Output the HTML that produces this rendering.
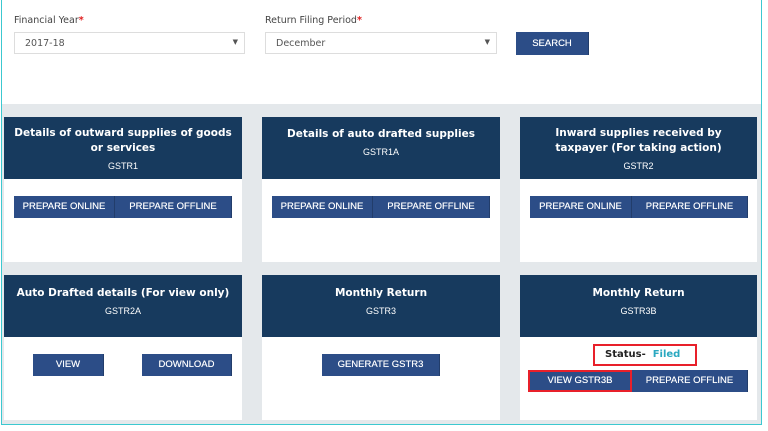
<!DOCTYPE html>
<html><head><style>
*{box-sizing:border-box;margin:0;padding:0}
body{width:768px;height:431px;background:#fff;font-family:"DejaVu Sans","Liberation Sans",sans-serif;position:relative;overflow:hidden}
.frame{position:absolute;left:1px;top:-2px;width:761px;height:427px;border:1px solid #3cc8d0}
.a{position:absolute}
.lbl{font-size:9.5px;color:#444}
.lbl b{color:#e02020}
.sel{height:22px;border:1px solid #ddd;font-size:9.5px;color:#555;padding:5px 10px}
.sel span{position:absolute;right:6px;top:5px;font-size:7px;color:#555}
.gray{left:2px;top:104px;width:759px;height:320px;background:#e4e8eb}
.card{background:#fff}
.hd{background:#173a5e;color:#fff;text-align:center;font-size:10.5px;font-weight:bold;line-height:15px;display:flex;flex-direction:column;justify-content:flex-start;padding-top:11px}
.hd small{font-weight:normal;font-size:9px;display:block;margin-top:3px;font-family:"Liberation Sans",sans-serif}
.btn{background:#2c4d87;color:#fff;font-size:9.5px;font-family:"Liberation Sans",sans-serif;text-align:center;line-height:22px;height:22px;border-right:1px solid #223d6b;text-shadow:0 0 0.4px #fff}
</style></head><body>
<div class="a gray"></div>
<div class="frame"></div>
<div class="a lbl" style="left:14px;top:15px">Financial Year<b>*</b></div>
<div class="a sel" style="left:14px;top:32px;width:231px">2017-18<span>▼</span></div>
<div class="a lbl" style="left:265px;top:15px">Return Filing Period<b>*</b></div>
<div class="a sel" style="left:265px;top:32px;width:232px">December<span>▼</span></div>
<div class="a btn" style="left:516px;top:32px;width:73px;height:23px;line-height:23px">SEARCH</div>

<div class="a card" style="left:4px;top:117px;width:238px;height:145px"></div>
<div class="a card" style="left:262px;top:117px;width:238px;height:145px"></div>
<div class="a card" style="left:520px;top:117px;width:237px;height:145px"></div>
<div class="a card" style="left:4px;top:275px;width:238px;height:145px"></div>
<div class="a card" style="left:262px;top:275px;width:238px;height:145px"></div>
<div class="a card" style="left:520px;top:275px;width:237px;height:145px"></div>

<div class="a hd" style="left:4px;top:117px;width:238px;height:62px;padding-top:9px">Details of outward supplies of goods<br>or services<small>GSTR1</small></div>
<div class="a hd" style="left:262px;top:117px;width:238px;height:62px;padding-top:10px">Details of auto drafted supplies<small>GSTR1A</small></div>
<div class="a hd" style="left:520px;top:117px;width:237px;height:62px;padding-top:9px">Inward supplies received by<br>taxpayer (For taking action)<small>GSTR2</small></div>
<div class="a hd" style="left:4px;top:275px;width:238px;height:62px">Auto Drafted details (For view only)<small>GSTR2A</small></div>
<div class="a hd" style="left:262px;top:275px;width:238px;height:62px">Monthly Return<small>GSTR3</small></div>
<div class="a hd" style="left:520px;top:275px;width:237px;height:62px">Monthly Return<small>GSTR3B</small></div>

<div class="a btn" style="left:14px;top:196px;width:101px">PREPARE ONLINE</div>
<div class="a btn" style="left:115px;top:196px;width:117px">PREPARE OFFLINE</div>
<div class="a btn" style="left:272px;top:196px;width:101px">PREPARE ONLINE</div>
<div class="a btn" style="left:373px;top:196px;width:117px">PREPARE OFFLINE</div>
<div class="a btn" style="left:530px;top:196px;width:102px">PREPARE ONLINE</div>
<div class="a btn" style="left:632px;top:196px;width:116px">PREPARE OFFLINE</div>

<div class="a btn" style="left:33px;top:354px;width:71px">VIEW</div>
<div class="a btn" style="left:142px;top:354px;width:90px">DOWNLOAD</div>
<div class="a btn" style="left:322px;top:354px;width:118px">GENERATE GSTR3</div>
<div class="a" style="left:593px;top:344px;width:104px;height:22px;border:2px solid #e8202a;font-size:10px;font-weight:bold;line-height:18px;padding-left:10px;color:#222">Status-&nbsp; <span style="color:#2aa8c0">Filed</span></div>
<div class="a btn" style="left:632px;top:370px;width:116px">PREPARE OFFLINE</div>
<div class="a btn" style="left:528px;top:370px;width:104px;border:2px solid #e8202a;line-height:18px">VIEW GSTR3B</div>
</body></html>
